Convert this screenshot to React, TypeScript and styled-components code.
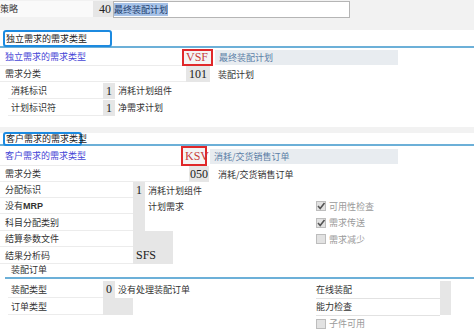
import styled, { createGlobalStyle } from "styled-components";

const GlobalStyle = createGlobalStyle`
  body {
    margin: 0;
    background: #fff;
    font-family: "Noto Sans CJK SC", "Noto Sans", sans-serif;
    font-size: 9px;
    color: #333;
  }
`;

const Page = styled.div`
  width: 474px;
  height: 335px;
  overflow: hidden;
`;

const TopPanel = styled.div`
  height: 30px;
  background: #f2f2f2;
  padding-top: 1px;
  box-sizing: border-box;
`;

const TopRow = styled.div`
  display: flex;
  align-items: center;
  height: 16px;
`;

const TopLabel = styled.div`
  width: 93px;
  height: 16px;
  line-height: 16px;
  background: #fafafa;
`;

const Num = styled.div<{ $w: number; $h?: number; $align?: string }>`
  width: ${(p) => p.$w}px;
  height: ${(p) => p.$h ?? 16}px;
  line-height: ${(p) => p.$h ?? 16}px;
  background: #e6e6e6;
  font-family: "Liberation Serif", "Noto Sans CJK SC", serif;
  font-size: 12px;
  color: #222;
  text-align: ${(p) => p.$align ?? "center"};
  padding-right: ${(p) => (p.$align === "right" ? 2 : 0)}px;
  box-sizing: border-box;
  flex-shrink: 0;
`;

const Input = styled.div`
  width: 237px;
  height: 17px;
  box-sizing: border-box;
  border: 1px solid #b5b5b5;
  background: #fff;
  display: flex;
  align-items: center;
`;

const Selected = styled.span`
  background: #a6c2e8;
  color: #1d3d6e;
  line-height: 13px;
`;

const TitleRow = styled.div<{ $h: number }>`
  position: relative;
  height: ${(p) => p.$h}px;
  border-bottom: 2px solid #6cb0d8;
`;

const TitleBox = styled.div<{ $w: number; $h: number; $top: number }>`
  position: absolute;
  left: 3px;
  top: ${(p) => p.$top}px;
  width: ${(p) => p.$w}px;
  height: ${(p) => p.$h}px;
  box-sizing: border-box;
  border: 2px solid #1c8ae0;
  border-radius: 3px;
  padding-left: 1px;
  line-height: ${(p) => p.$h - 4}px;
  white-space: nowrap;
  color: #222;
`;

const Row = styled.div<{ $h?: number }>`
  display: flex;
  align-items: center;
  height: ${(p) => p.$h ?? 16}px;
`;

const Label = styled.div<{ $w: number; $indent?: number; $blue?: boolean }>`
  width: ${(p) => p.$w}px;
  margin-left: ${(p) => p.$indent ?? 0}px;
  padding-left: ${(p) => (p.$indent ? 3 : 5)}px;
  box-sizing: border-box;
  height: 100%;
  display: flex;
  align-items: center;
  border-bottom: 1px solid #ececec;
  color: ${(p) => (p.$blue ? "#4646d6" : "#333")};
  flex-shrink: 0;
`;

const RedBox = styled.div<{ $w: number; $h: number }>`
  width: ${(p) => p.$w}px;
  height: ${(p) => p.$h}px;
  box-sizing: border-box;
  border: 2px solid #e0282a;
  background: #f4f4f4;
  font-family: "Liberation Serif", serif;
  font-size: 12px;
  color: #c83c3c;
  line-height: ${(p) => p.$h - 4}px;
  padding-left: 2px;
  flex-shrink: 0;
`;

const Display = styled.div<{ $w: number; $gap: number }>`
  width: ${(p) => p.$w}px;
  margin-left: ${(p) => p.$gap}px;
  height: 15px;
  line-height: 15px;
  background: #e8ecf0;
  color: #5b7ea6;
  padding-left: 4px;
  box-sizing: border-box;
`;

const Text = styled.div<{ $gap?: number }>`
  margin-left: ${(p) => p.$gap ?? 3}px;
  white-space: nowrap;
`;

const Band = styled.div`
  height: 6px;
  margin-top: 11px;
  background: #f2f2f2;
`;

const Left = styled.div`
  display: flex;
  align-items: center;
  width: 316px;
  height: 100%;
`;

const Check = styled.div<{ $on?: boolean }>`
  display: flex;
  align-items: center;
  gap: 3px;
  color: #9a9a9a;
  svg {
    display: block;
  }
`;

const RightLabel = styled.div`
  width: 124px;
  height: 100%;
  display: flex;
  align-items: center;
  border-bottom: 1px solid #e2e2e2;
  color: #333;
`;

const SubTitle = styled.div`
  height: 13px;
  line-height: 12px;
  margin-left: 5px;
  padding-left: 6px;
  border-bottom: 2px solid #6cb0d8;
`;

const Box = ({ on }: { on?: boolean }) => (
  <svg width="10" height="10" viewBox="0 0 10 10">
    <rect x="0.5" y="0.5" width="9" height="9" fill="#e2e2e2" stroke="#bdbdbd" />
    {on && <path d="M2 5 L4.2 7.5 L8.5 2" fill="none" stroke="#555" strokeWidth="1.6" />}
  </svg>
);

const CheckItem = ({ on, text }: { on?: boolean; text: string }) => (
  <Check>
    <Box on={on} />
    {text}
  </Check>
);

export default function App() {
  return (
    <Page>
      <GlobalStyle />
      <TopPanel>
        <TopRow>
          <TopLabel>策略</TopLabel>
          <Num $w={20} $align="right">40</Num>
          <Input>
            <Selected>最终装配计划</Selected>
          </Input>
        </TopRow>
      </TopPanel>

      <TitleRow $h={16}>
        <TitleBox $w={109} $h={17} $top={0}>独立需求的需求类型</TitleBox>
      </TitleRow>
      <Row $h={18}>
        <Label $w={182} $blue>独立需求的需求类型</Label>
        <RedBox $w={31} $h={17}>VSF</RedBox>
        <Display $w={183} $gap={2}>最终装配计划</Display>
      </Row>
      <Row>
        <Label $w={186}>需求分类</Label>
        <Num $w={24}>101</Num>
        <Text $gap={8}>装配计划</Text>
      </Row>
      <Row $h={17}>
        <Label $w={95} $indent={8}>消耗标识</Label>
        <Num $w={12}>1</Num>
        <Text>消耗计划组件</Text>
      </Row>
      <Row $h={17}>
        <Label $w={95} $indent={8}>计划标识符</Label>
        <Num $w={12}>1</Num>
        <Text>净需求计划</Text>
      </Row>

      <Band />

      <TitleRow $h={11}>
        <TitleBox $w={79} $h={14} $top={-1}>客户需求的需求类型</TitleBox>
      </TitleRow>
      <Row $h={20}>
        <Label $w={181} $blue>客户需求的需求类型</Label>
        <RedBox $w={26} $h={20}>KSV</RedBox>
        <Display $w={188} $gap={3}>消耗/交货销售订单</Display>
      </Row>
      <Row>
        <Label $w={189}>需求分类</Label>
        <Num $w={20}>050</Num>
        <Text $gap={9}>消耗/交货销售订单</Text>
      </Row>
      <Row>
        <Left>
          <Label $w={133}>分配标识</Label>
          <Num $w={12}>1</Num>
          <Text>消耗计划组件</Text>
        </Left>
      </Row>
      <Row>
        <Left>
          <Label $w={133}>
            没有<b style={{ fontFamily: "Liberation Sans" }}>MRP</b>
          </Label>
          <Num $w={12} />
          <Text>计划需求</Text>
        </Left>
        <CheckItem on text="可用性检查" />
      </Row>
      <Row $h={17}>
        <Left>
          <Label $w={133}>科目分配类别</Label>
          <Num $w={12} $h={17} />
        </Left>
        <CheckItem on text="需求传送" />
      </Row>
      <Row>
        <Left>
          <Label $w={133}>结算参数文件</Label>
          <Num $w={40} />
        </Left>
        <CheckItem text="需求减少" />
      </Row>
      <Row $h={17}>
        <Left>
          <Label $w={133}>结果分析码</Label>
          <Num $w={40} $h={17} $align="left">&nbsp;SFS</Num>
        </Left>
      </Row>

      <SubTitle>装配订单</SubTitle>
      <Row $h={17} style={{ marginTop: 2 }}>
        <Left>
          <Label $w={95} $indent={8}>装配类型</Label>
          <Num $w={12} $h={17}>0</Num>
          <Text>没有处理装配订单</Text>
        </Left>
        <RightLabel>在线装配</RightLabel>
        <Num $w={11} $h={17} />
      </Row>
      <Row $h={17}>
        <Left>
          <Label $w={95} $indent={8}>订单类型</Label>
          <Num $w={30} $h={17} />
        </Left>
        <RightLabel>能力检查</RightLabel>
        <Num $w={11} $h={17} />
      </Row>
      <Row $h={17}>
        <Left />
        <CheckItem text="子件可用" />
      </Row>
    </Page>
  );
}
